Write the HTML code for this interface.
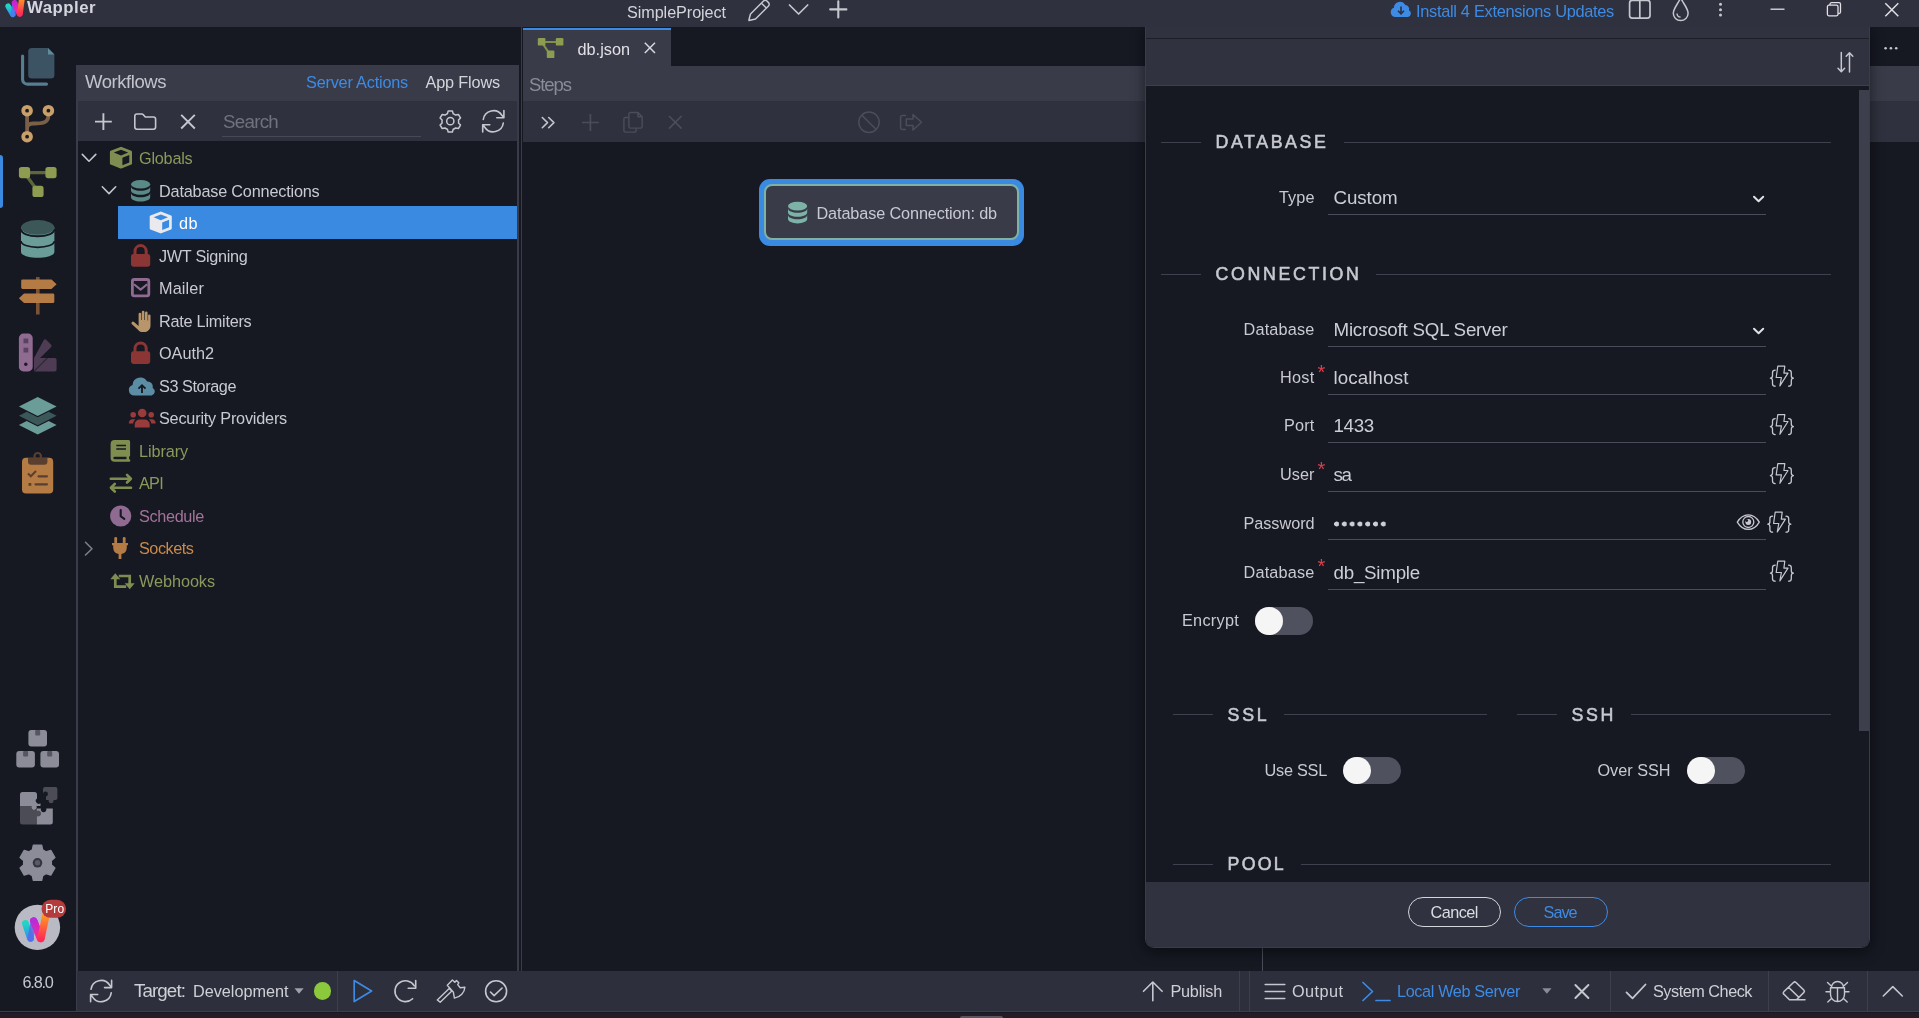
<!DOCTYPE html>
<html><head><meta charset="utf-8"><title>Wappler</title>
<style>
html,body{margin:0;padding:0;}
body{width:1919px;height:1018px;overflow:hidden;background:#161822;position:relative;font-family:"Liberation Sans",sans-serif;}
.a{position:absolute;}
.t{position:absolute;white-space:nowrap;line-height:24px;height:24px;}
svg{position:absolute;overflow:visible;}
.ln{position:absolute;height:1px;background:#3f414e;}
.ul{position:absolute;height:1px;background:#4a4c59;left:1328px;width:437.5px;}
.tg{position:absolute;width:58px;height:27.5px;border-radius:14px;background:#4f515e;}
.tg:after{content:"";position:absolute;left:0;top:0;width:27.5px;height:100%;border-radius:50%;background:#f5f5f6;}
.vs{position:absolute;width:1px;background:#3d3f4c;}
#tx{position:absolute;left:0;top:0;width:1919px;height:1018px;will-change:transform;}

</style></head>
<body>
<!-- base frames -->
<!-- left panel -->
<div class="a" style="left:76px;top:65px;width:2px;height:946px;background:#3a3c49"></div>
<div class="a" style="left:76px;top:65px;width:441.5px;height:35.5px;background:#393b49"></div>
<div class="a" style="left:78px;top:100.5px;width:439.5px;height:40px;background:#2f313e"></div>
<div class="a" style="left:222px;top:136px;width:199px;height:1px;background:#474956"></div>
<div class="a" style="left:118px;top:206px;width:399.5px;height:32.5px;background:#3b8ae2"></div>
<div class="a" style="left:517px;top:65px;width:1.9px;height:906px;background:#393b49"></div>
<div class="a" style="left:521px;top:27px;width:1.2px;height:944px;background:#393b49"></div>
<!-- active indicator -->
<div class="a" style="left:0;top:154.5px;width:3px;height:53px;background:#3b8ae2;border-radius:0 4px 4px 0"></div>
<!-- center pane -->
<div class="a" style="left:523px;top:28px;width:148px;height:38px;background:#393b49;border-top:2.2px solid #3b8ae2;box-sizing:border-box"></div>
<div class="a" style="left:523px;top:66px;width:1396px;height:34.5px;background:#393b49"></div>
<div class="a" style="left:523px;top:100.7px;width:1396px;height:41.2px;background:#2f313e"></div>
<!-- node -->
<div class="a" style="left:759px;top:179.2px;width:264.800px;height:66.600px;border-radius:11px;background:#3b8ae2"></div>
<div class="a" style="left:764px;top:184.200px;width:255.400px;height:56.200px;border-radius:8px;background:#393b49;border:2px solid #7fb2a5;box-sizing:border-box"></div>
<!-- bottom bar -->
<div class="a" style="left:76.700px;top:970.600px;width:1842.300px;height:40.400px;background:#2d2f3c"></div>
<div class="a" style="left:0;top:1011px;width:1919px;height:1.3px;background:#403d48"></div>
<div class="a" style="left:0;top:1012.5px;width:1919px;height:5.5px;background:#251c27"></div>
<div class="a" style="left:960px;top:1015.5px;width:43px;height:2.5px;background:#5a5560;border-radius:2px 2px 0 0"></div>
<div class="vs" style="left:337px;top:971px;height:40px"></div>
<div class="vs" style="left:1238.5px;top:971px;height:40px"></div>
<div class="vs" style="left:1249px;top:971px;height:40px"></div>
<div class="vs" style="left:1610px;top:971px;height:40px"></div>
<div class="vs" style="left:1767.5px;top:971px;height:40px"></div>
<div class="vs" style="left:1866.5px;top:971px;height:40px"></div>
<div class="vs" style="left:1262px;top:947px;height:24px;background:#4a4c59"></div>
<div class="a" style="left:313.900px;top:982.200px;width:17.400px;height:17.400px;border-radius:50%;background:#8cc83c"></div>
<!-- dialog -->
<div class="a" id="dlg" style="left:1145.5px;top:27px;width:723px;height:919.800px;background:#161822;border-radius:0 0 9px 9px;overflow:hidden;box-shadow:0 3px 14px rgba(0,0,0,.5);border:1px solid #3a3c49;border-top:none;box-sizing:content-box;margin-left:-1px">
  <div class="a" style="left:0;top:0;width:724px;height:11px;background:#30323f"></div>
  <div class="a" style="left:0;top:11px;width:724px;height:1px;background:#1c1e28"></div>
  <div class="a" style="left:0;top:12px;width:724px;height:46px;background:#30323f"></div>
  <div class="a" style="left:0;top:58px;width:724px;height:1px;background:#3d3f4c"></div>
  <div class="a" style="left:713.500px;top:63px;width:9.500px;height:641px;background:#3d3f4c"></div>
  <div class="a" style="left:0;top:854.500px;width:724px;height:66px;background:#30323f"></div>
</div>
<div class="a" style="left:0;top:0;width:1919px;height:27px;background:#2f313e"></div>
<!-- dialog lines -->
<div class="ln" style="left:1161px;top:142px;width:40px"></div><div class="ln" style="left:1344px;top:142px;width:487px"></div>
<div class="ln" style="left:1161px;top:274px;width:40px"></div><div class="ln" style="left:1376px;top:274px;width:455px"></div>
<div class="ln" style="left:1173px;top:713.9px;width:40px"></div><div class="ln" style="left:1284px;top:713.9px;width:203px"></div>
<div class="ln" style="left:1517px;top:713.9px;width:40px"></div><div class="ln" style="left:1631px;top:713.9px;width:200px"></div>
<div class="ln" style="left:1173px;top:864px;width:40px"></div><div class="ln" style="left:1301px;top:864px;width:530px"></div>
<div class="ul" style="top:213.800px"></div>
<div class="ul" style="top:345.900px"></div>
<div class="ul" style="top:393.700px"></div>
<div class="ul" style="top:441.800px"></div>
<div class="ul" style="top:490.900px"></div>
<div class="ul" style="top:539.300px"></div>
<div class="ul" style="top:588.700px"></div>
<div class="tg" style="left:1255px;top:607px;height:28px"></div>
<div class="tg" style="left:1343px;top:756.5px"></div>
<div class="tg" style="left:1687px;top:756.5px"></div>
<div class="a" style="left:1408px;top:897px;width:93px;height:30px;border:1.5px solid #d4d5da;border-radius:16px;box-sizing:border-box"></div>
<div class="a" style="left:1514px;top:897px;width:94px;height:30px;border:1.5px solid #3d8be4;border-radius:16px;box-sizing:border-box"></div>
<!-- password dots -->
<div class="a" style="left:1334.200px;top:520.800px;width:52.500px;height:6px;background:radial-gradient(circle at 2.600px 3px,#cdced5 2.200px,transparent 2.800px);background-size:7.800px 6px"></div>
<!-- icon bar -->
<svg width="1919" height="1018" viewBox="0 0 1919 1018" style="left:0;top:0;pointer-events:none">
<!-- files -->
<path d="M22.6 56 V79.5 a4.6 4.6 0 0 0 4.6 4.6 H46.5" fill="none" stroke="#557f8f" stroke-width="3.1" stroke-linecap="round"/>
<path d="M31.8 48 H48 L54.4 54.4 V75 a3.6 3.6 0 0 1 -3.6 3.6 H31.8 a3.6 3.6 0 0 1 -3.6 -3.6 V51.6 a3.6 3.6 0 0 1 3.6 -3.6z" fill="#3c5363"/>
<path d="M48 48 L54.4 54.4 H48z" fill="#5f8b9b"/>
<!-- git -->
<path d="M27.1 115 V131.5 M48.4 115.5 C48.4 124 40 123.5 33 123.5 C29 123.5 27.1 125.5 27.1 128" fill="none" stroke="#7a6047" stroke-width="3.8"/>
<g fill="#c9a06a"><circle cx="27.1" cy="110.7" r="5.8"/><circle cx="48.4" cy="110.7" r="5.8"/><circle cx="27.1" cy="136.7" r="5.8"/></g>
<g fill="#1c1a20"><circle cx="27.1" cy="110.7" r="1.9"/><circle cx="48.4" cy="110.7" r="1.9"/><circle cx="27.1" cy="136.7" r="1.9"/></g>
<!-- workflow -->
<path d="M27 172.6 H50 M26 175 L37 190" stroke="#5d6739" stroke-width="3.2" fill="none"/>
<g fill="#8d9c50"><rect x="18.9" y="166.9" width="11.2" height="11.3" rx="2.6"/><rect x="45.4" y="166.9" width="11.2" height="11.3" rx="2.6"/><rect x="32.4" y="185.8" width="11.2" height="11.3" rx="2.6"/></g>
<!-- db -->
<path d="M21 227.500 V252 c0 3.200 7.500 5.800 16.700 5.800 s16.700 -2.600 16.700 -5.800 V227.500z" fill="#6a9c98"/>
<path d="M21 241 C21 244.800 28.500 247.300 37.700 247.300 S54.400 244.800 54.400 241" fill="none" stroke="#161822" stroke-width="1.700"/>
<path d="M21 229 C21 233.500 28.500 236.300 37.700 236.300 S54.400 233.500 54.400 229" fill="none" stroke="#161822" stroke-width="2"/>
<ellipse cx="37.700" cy="227.400" rx="16.700" ry="7.400" fill="#3c5758"/>
<!-- signpost -->
<rect x="36" y="277" width="3.600" height="37.500" fill="#7a5337"/>
<path d="M22.500 279.500 H51.500 L56.600 284.200 L51.500 288.900 H22.500 a1.300 1.300 0 0 1 -1.300 -1.300 V280.800 a1.300 1.300 0 0 1 1.300 -1.300z" fill="#b57b45"/>
<path d="M53 293.600 H24 L18.900 298.300 L24 303 H53 a1.300 1.300 0 0 0 1.300 -1.300 V294.900 a1.300 1.300 0 0 0 -1.300 -1.300z" fill="#b57b45"/>
<!-- swatch -->
<path d="M34 371.400 L34 358 L43.500 340.500 a2 2 0 0 1 3 -0.500 L51 344.500 a2 2 0 0 1 0 2.800 L40 358 H54.600 a2 2 0 0 1 2 2 V369.400 a2 2 0 0 1 -2 2z" fill="#4e3c54"/>
<path d="M34 371.400 L51.800 353.500" stroke="#161822" stroke-width="1.2" fill="none" opacity=".55"/>
<rect x="18.900" y="333.600" width="13.800" height="37.800" rx="4.500" fill="#8f6a91"/>
<rect x="23.500" y="338.500" width="4.800" height="4.800" fill="#5a4260"/><rect x="23.500" y="347.700" width="4.800" height="4.800" fill="#5a4260"/><circle cx="25.800" cy="364.300" r="1.700" fill="#20182a"/>
<!-- layers -->
<path d="M18.900 425 L26.700 421 L37.700 426.600 L48.700 421 L56.600 425 L37.700 434.600z" fill="#6a9c98"/>
<path d="M18.900 415.700 L26.700 411.700 L37.700 417.300 L48.700 411.700 L56.600 415.700 L37.700 425.300z" fill="#3c5758"/>
<path d="M37.700 397 L56.600 406.500 L37.700 416.100 L18.900 406.500z" fill="#6a9c98"/>
<!-- clipboard -->
<rect x="22" y="457.800" width="31.200" height="35.600" rx="4" fill="#b57b45"/>
<circle cx="37.700" cy="456.300" r="3.300" fill="none" stroke="#5b3f2e" stroke-width="2.200"/>
<path d="M28 458 H47.400 V461.800 a3 3 0 0 1 -3 3 H31 a3 3 0 0 1 -3 -3z" fill="#5b3f2e"/>
<path d="M28 473.500 L30.800 476.300 L36 471" stroke="#5b3f2e" stroke-width="2" fill="none"/>
<path d="M38.500 476.300 H47 M35.500 484.300 H47" stroke="#5b3f2e" stroke-width="2.200" fill="none" stroke-linecap="round"/>
<rect x="28.500" y="483" width="2.800" height="2.800" fill="#5b3f2e"/>
<!-- boxes -->
<g fill="#8b8c97"><rect x="28.400" y="730" width="18.600" height="16.400" rx="3"/><rect x="16.300" y="751" width="18.600" height="16.400" rx="3"/><rect x="40.400" y="751" width="18.600" height="16.400" rx="3"/></g>
<g fill="#55565f"><rect x="35.200" y="730" width="5" height="5.500" rx="1"/><rect x="23.100" y="751" width="5" height="5.500" rx="1"/><rect x="47.200" y="751" width="5" height="5.500" rx="1"/></g>
<!-- puzzle -->
<path d="M43 789 a2 2 0 0 1 2 -2 H55.400 a2 2 0 0 1 2 2 V798 a2 2 0 0 1 -2 2 H53.500 a2.500 2.500 0 1 1 -4.800 0 H46 V796.500 a2.500 2.500 0 1 0 -3 -2.600z" fill="#4b4c56"/>
<path d="M20 794.500 a2.500 2.500 0 0 1 2.500 -2.500 H34.500 a2.500 2.500 0 0 1 2.500 2.500 V798.500 a2.800 2.800 0 1 0 3.500 4.700 V806 H36.500 a2.800 2.800 0 1 1 -5 0 H20z" fill="#8b8c97"/>
<path d="M20 806 H31.500 a2.800 2.800 0 1 0 5 0 H36.800 V811 a2.800 2.800 0 1 1 0 5 V824.400 H22.500 a2.500 2.500 0 0 1 -2.500 -2.500z" fill="#4b4c56"/>
<path d="M36.800 808.500 H41 a2.800 2.800 0 1 0 5.200 0 H52.800 V822 a2.500 2.500 0 0 1 -2.500 2.500 H36.800 V816 a2.800 2.800 0 1 0 0 -5z" fill="#8b8c97"/>
<!-- gear -->
<g transform="translate(37.500 862.800) scale(.96)">
<path id="gt" d="M-4.300 -18.300 h8.600 l1.100 5 a13.800 13.800 0 0 1 3.500 2 l4.900 -1.600 l4.300 7.400 l-3.800 3.400 a13.800 13.800 0 0 1 0 4.100 l3.800 3.400 l-4.300 7.400 l-4.900 -1.600 a13.800 13.800 0 0 1 -3.500 2 l-1.100 5 h-8.600 l-1.100 -5 a13.800 13.800 0 0 1 -3.500 -2 l-4.900 1.600 l-4.300 -7.400 l3.800 -3.400 a13.800 13.800 0 0 1 0 -4.100 l-3.800 -3.400 l4.300 -7.400 l4.900 1.600 a13.800 13.800 0 0 1 3.500 -2z" fill="#8b8c97" stroke="#8b8c97" stroke-width="1.500" stroke-linejoin="round"/>
<circle r="5" fill="#33343e"/><circle r="2.800" fill="#585962"/>
</g>
<!-- avatar -->
<circle cx="37.400" cy="927.400" r="22.700" fill="#b9bac4"/>
<defs>
<linearGradient id="w1" x1="0" y1="0" x2="0" y2="1"><stop offset="0" stop-color="#1fd6c4"/><stop offset="1" stop-color="#2f8ff0"/></linearGradient>
<linearGradient id="w2" x1="0" y1="0" x2="0" y2="1"><stop offset="0" stop-color="#c822d8"/><stop offset="1" stop-color="#ff2d8a"/></linearGradient>
<linearGradient id="w3" x1="0" y1="0" x2="0" y2="1"><stop offset="0" stop-color="#ff9a1f"/><stop offset="1" stop-color="#ff2d55"/></linearGradient>
</defs>
<path d="M25.500 923.500 L30.500 938.500" stroke="url(#w1)" stroke-width="7" stroke-linecap="round"/>
<path d="M33.500 920.500 L30.500 938.500" stroke="#3f7fe8" stroke-width="7" stroke-linecap="round" opacity=".0"/>
<path d="M33.800 921 L40.500 938.500" stroke="url(#w2)" stroke-width="7.400" stroke-linecap="round"/>
<path d="M33.800 921 L30.500 938.500" stroke="#5a6ae8" stroke-width="6" stroke-linecap="round" opacity=".85"/>
<path d="M33.800 921 L40.500 938.500" stroke="url(#w2)" stroke-width="7.400" stroke-linecap="round" opacity=".8"/>
<path d="M46 915 L41 938.500" stroke="url(#w3)" stroke-width="7.400" stroke-linecap="round"/>
<rect x="41.500" y="899.800" width="24.600" height="18" rx="9" fill="#b43a3c"/>
</svg>
<svg width="1919" height="1018" viewBox="0 0 1919 1018" style="left:0;top:0;pointer-events:none">
<!-- logo -->
<path d="M8.200 6.300 L12.800 14.300" stroke="url(#w1)" stroke-width="5.600" stroke-linecap="round"/>
<path d="M14.600 3 L12.900 14.300" stroke="#4a7cf0" stroke-width="4.800" stroke-linecap="round" opacity=".9"/>
<path d="M14.600 3 L19.600 13.800" stroke="url(#w2)" stroke-width="5.800" stroke-linecap="round"/>
<path d="M22 -2 L19.900 13.600" stroke="url(#w3)" stroke-width="5.800" stroke-linecap="round"/>
<!-- title: pencil -->
<g fill="none" stroke="#c6c7ce" stroke-width="1.500" stroke-linejoin="round" stroke-linecap="round">
<path d="M749 19.500 L750.500 14 L763.500 1 a2.400 2.400 0 0 1 3.400 0 L768.500 2.600 a2.400 2.400 0 0 1 0 3.400 L755.500 19 L749 20.500z M761.500 3.200 L766.300 8"/>
<path d="M789.500 5 L798.600 14 L807.700 5" stroke-width="1.700"/>
<path d="M838.300 1.300 V17.500 M830.200 9.400 H846.400" stroke-width="2.100"/>
</g>
<!-- cloud download -->
<path d="M1395.500 17 a4.800 4.800 0 0 1 -1.600 -9.300 a6.200 6.200 0 0 1 11.500 -2.800 a4.200 4.200 0 0 1 3.600 5.400 a3.600 3.600 0 0 1 -1 6.700z" fill="#3d8be4"/>
<path d="M1401 6.500 V13.500 M1398 10.800 L1401 13.800 L1404 10.800" stroke="#2f313e" stroke-width="1.600" fill="none"/>
<!-- split icon -->
<g fill="none" stroke="#c6c7ce" stroke-width="1.700">
<rect x="1629.600" y="0.300" width="20.400" height="17.900" rx="2.600"/><path d="M1639.800 0.300 V18.200"/>
<path d="M1680.700 -2 C1677 5 1673.300 9 1673.300 13.200 a7.400 7.400 0 0 0 14.800 0 C1688.100 9 1684.400 5 1680.700 -2z" stroke-width="1.500"/>
<path d="M1677 13.500 a3.800 3.800 0 0 0 3.600 3.600" stroke-width="1.400"/>
</g>
<g fill="#c6c7ce"><circle cx="1720.500" cy="4.300" r="1.500"/><circle cx="1720.500" cy="9.700" r="1.500"/><circle cx="1720.500" cy="15.100" r="1.500"/></g>
<g fill="none" stroke="#e0e0e5" stroke-width="1.300">
<path d="M1770.500 9.200 H1784.500"/>
<rect x="1827.400" y="5.200" width="10.600" height="10.600" rx="1.500"/><path d="M1830 5 V4.200 a1.500 1.500 0 0 1 1.500 -1.500 H1839 a1.500 1.500 0 0 1 1.500 1.500 V12 a1.500 1.500 0 0 1 -1.500 1.500 H1838.200"/>
<path d="M1885.300 3.200 L1898.300 16.200 M1898.300 3.200 L1885.300 16.200" stroke-width="1.500"/>
</g>
<!-- left toolbar -->
<g fill="none" stroke="#c6c7ce" stroke-width="1.900">
<path d="M103.400 113.200 V130 M95 121.600 H111.800"/>
<path d="M134.800 127 V116.200 a2.200 2.200 0 0 1 2.200 -2.200 H141.800 a2 2 0 0 1 1.500 0.700 L145.300 117 H153.400 a2.200 2.200 0 0 1 2.200 2.200 V127 a2.200 2.200 0 0 1 -2.200 2.200 H137 a2.200 2.200 0 0 1 -2.200 -2.200z" stroke-width="1.600"/>
<path d="M181.200 114.900 L194.800 128.500 M194.800 114.900 L181.200 128.500"/>
</g>
<!-- gear outline -->
<g transform="translate(450.300 121.200)" fill="none" stroke="#c6c7ce" stroke-width="1.500" stroke-linejoin="round">
<path d="M-2.100 -10.300 h4.200 l0.800 2.800 a7.800 7.800 0 0 1 2.400 1.400 l2.800 -0.700 l2.100 3.600 l-2 2.100 a7.800 7.800 0 0 1 0 2.800 l2 2.100 l-2.100 3.600 l-2.800 -0.700 a7.800 7.800 0 0 1 -2.400 1.400 l-0.800 2.800 h-4.200 l-0.800 -2.800 a7.800 7.800 0 0 1 -2.400 -1.400 l-2.800 0.700 l-2.100 -3.600 l2 -2.100 a7.800 7.800 0 0 1 0 -2.800 l-2 -2.100 l2.100 -3.600 l2.800 0.700 a7.800 7.800 0 0 1 2.400 -1.400z"/>
<circle r="3.600"/>
</g>
<!-- refresh -->
<g fill="none" stroke="#c6c7ce" stroke-width="1.600" stroke-linecap="round" stroke-linejoin="round">
<path d="M483.300 119.500 a10.200 10.200 0 0 1 18.600 -4.300 L503.700 117.500 M503.900 110.600 V117.800 H496.800"/>
<path d="M503.300 123 a10.200 10.200 0 0 1 -18.600 4.300 L482.900 125 M482.700 131.900 V124.700 H489.800"/>
</g>
<!-- tree chevrons -->
<g fill="none" stroke="#c4c5cc" stroke-width="1.600" stroke-linecap="round" stroke-linejoin="round">
<path d="M82.300 154.400 L89 161.200 L95.800 154.400"/>
<path d="M102.300 186.800 L109 193.600 L115.700 186.800"/>
<path d="M85.500 542.300 L92 548.700 L85.500 555" stroke="#7d7e8a"/>
</g>
<!-- cube icons -->
<g id="cube" fill="#7f8e50">
<path fill-rule="evenodd" d="M121 146.800 L131.300 150.800 a1.200 1.200 0 0 1 0.700 1.100 V163.500 a1.200 1.200 0 0 1 -0.700 1.100 L121.400 168.500 a1.200 1.200 0 0 1 -0.900 0 L110.600 164.600 a1.200 1.200 0 0 1 -0.700 -1.100 V151.900 a1.200 1.200 0 0 1 0.700 -1.100 L120.500 146.900 a1.200 1.200 0 0 1 0.500 -0.100z M121 149.700 L113.800 152.500 L121 155.400 L128.200 152.500z M122.400 157.800 V165.200 L129.300 162.500 V155z"/>
</g>

<g transform="translate(39.800 64.800)" fill="#e9e9ee">
<path fill-rule="evenodd" d="M121 146.800 L131.300 150.800 a1.200 1.200 0 0 1 0.700 1.100 V163.500 a1.200 1.200 0 0 1 -0.700 1.100 L121.400 168.500 a1.200 1.200 0 0 1 -0.900 0 L110.600 164.600 a1.200 1.200 0 0 1 -0.700 -1.100 V151.900 a1.200 1.200 0 0 1 0.700 -1.100 L120.500 146.900 a1.200 1.200 0 0 1 0.500 -0.100z M121 149.700 L113.800 152.500 L121 155.400 L128.200 152.500z M122.400 157.800 V165.200 L129.300 162.500 V155z"/>
</g>
<!-- tree db icon -->
<g id="dbs" fill="#5a8a87">
<ellipse cx="140.600" cy="184.200" rx="9.600" ry="4.300"/>
<path d="M131 186.500 c0 2.400 4.300 4.300 9.600 4.300 s9.600 -1.900 9.600 -4.300 V190.500 c0 2.400 -4.300 4.300 -9.600 4.300 s-9.600 -1.900 -9.600 -4.300z"/>
<path d="M131 193 c0 2.400 4.300 4.300 9.600 4.300 s9.600 -1.900 9.600 -4.300 V197.200 c0 2.400 -4.300 4.300 -9.600 4.300 s-9.600 -1.900 -9.600 -4.300z"/>
</g>
<!-- locks -->
<g id="lock" fill="#8c3535">
<rect x="131" y="254" width="19.200" height="12.700" rx="2.400"/>
<path d="M135 255 V251.200 a5.600 5.600 0 0 1 11.200 0 V255" fill="none" stroke="#8c3535" stroke-width="3"/>
</g>
<use href="#lock" y="97.300"/>
<!-- mail -->
<g fill="none" stroke="#8f6a91" stroke-linejoin="round">
<rect x="132.400" y="279.500" width="16.400" height="16.400" rx="1.800" stroke-width="2.800"/>
<path d="M134 284.200 L140.600 289.600 L147.200 284.200" stroke-width="2.100"/>
</g>
<!-- hand -->
<g fill="#b8956a">
<path d="M138.600 322 V314 a1.300 1.300 0 0 1 2.600 0 V320 h0.600 V312 a1.300 1.300 0 0 1 2.600 0 V320 h0.600 V312.800 a1.300 1.300 0 0 1 2.600 0 V320.500 h0.500 V315.600 a1.200 1.200 0 0 1 2.400 0 V325.500 c0 4 -2.800 6.600 -6.600 6.600 h-1 c-2.400 0 -4 -1 -5.200 -2.600 L131.700 323.900 a1.500 1.500 0 0 1 2.300 -1.900 L138.600 326z"/>
</g>
<!-- cloud up -->
<path d="M134.300 395.400 a5.400 5.400 0 0 1 -1.800 -10.500 a7.800 7.800 0 0 1 14.600 -3.400 a5.300 5.300 0 0 1 5.700 6.500 a4 4 0 0 1 -1.200 7.400z" fill="#5b8ea4"/>
<path d="M142 393 V385.500 M138.500 388.700 L142 385.200 L145.500 388.700" stroke="#161822" stroke-width="1.800" fill="none"/>
<!-- users -->
<g fill="#9a3b3b">
<circle cx="142.200" cy="413" r="4.300"/><path d="M134.700 427.500 V424.500 a5 5 0 0 1 5 -5 h5 a5 5 0 0 1 5 5 V427.500z"/>
<circle cx="133.200" cy="414.700" r="2.800"/><circle cx="151.200" cy="414.700" r="2.800"/>
<path d="M128.800 423.500 a3.800 3.800 0 0 1 3.800 -4.300 h2.800 a6.500 6.500 0 0 0 -2.300 4.300z M155.600 423.500 a3.800 3.800 0 0 0 -3.800 -4.300 h-2.800 a6.500 6.500 0 0 1 2.300 4.300z"/>
</g>
<!-- book -->
<path d="M114.600 440 H128.600 a1.500 1.500 0 0 1 1.500 1.500 V455.500 a1 1 0 0 1 -1 1 V459.200 a1.200 1.200 0 0 1 0 2.500 H114.600 a4 4 0 0 1 -4 -4 V444 a4 4 0 0 1 4 -4z M114.600 456.800 a1.200 1.200 0 0 0 0 2.500 H126.500 V456.800z" fill="#7f8e50" fill-rule="evenodd"/>
<path d="M116.300 445.500 H126 M116.300 449 H126" stroke="#161822" stroke-width="1.400"/>
<!-- exchange arrows -->
<g fill="none" stroke="#7f8e50" stroke-width="2.600" stroke-linecap="round" stroke-linejoin="round">
<path d="M110.800 478.700 H130.800 M127 474.900 L130.900 478.700 L127 482.500"/>
<path d="M131 487.700 H111 M114.800 483.900 L110.900 487.700 L114.800 491.500"/>
</g>
<!-- clock -->
<circle cx="120.700" cy="516" r="10.600" fill="#8f6a91"/>
<path d="M120.700 510 V516.300 L124.300 518.800" stroke="#161822" stroke-width="2.100" fill="none" stroke-linecap="round"/>
<!-- plug -->
<g fill="#b57b45">
<rect x="114.300" y="537" width="2.800" height="7" rx="1.200"/><rect x="122.800" y="537" width="2.800" height="7" rx="1.200"/>
<path d="M112 543 H128 V545.300 H126.800 V547.500 a6.800 6.800 0 0 1 -5.400 6.600 V559 H118.600 V554.100 a6.800 6.800 0 0 1 -5.400 -6.600 V545.300 H112z"/>
</g>
<!-- retweet -->
<g fill="none" stroke="#7f8e50" stroke-width="2.700" stroke-linejoin="miter">
<path d="M115.300 578.500 V586.600 H126.200"/>
<path d="M129.700 584 V576 H118.800"/>
</g>
<g fill="#7f8e50"><path d="M110.300 579.300 L115.300 573.300 L120.300 579.300z"/><path d="M124.700 583.300 L129.700 589.300 L134.700 583.300z"/></g>
</svg>
<svg width="1919" height="1018" viewBox="0 0 1919 1018" style="left:0;top:0;pointer-events:none">
<!-- tab icon -->
<path d="M542 42 H557 M543 44 L549 53" stroke="#828f48" stroke-width="2.200" fill="none"/>
<g fill="#8d9c50"><rect x="537.800" y="38" width="7.600" height="7.600" rx="1.200"/><rect x="555.800" y="38" width="7.600" height="7.600" rx="1.200"/><rect x="546.800" y="50.500" width="7.600" height="7.600" rx="1.200"/></g>
<path d="M644.800 42.800 L655 53 M655 42.800 L644.800 53" stroke="#d8d9de" stroke-width="1.500" fill="none"/>
<!-- center toolbar -->
<g fill="none" stroke="#c4c5cc" stroke-width="1.600" stroke-linecap="round" stroke-linejoin="round">
<path d="M542.300 117.500 L547.500 122.600 L542.300 127.700 M548.700 117.500 L553.900 122.600 L548.700 127.700"/>
</g>
<g fill="none" stroke="#4b4d5a" stroke-width="1.700" stroke-linejoin="round">
<path d="M590.400 114 V131 M582 122.500 H598.800"/>
<path d="M669 116 L681.600 128.600 M681.600 116 L669 128.600"/>
<path d="M630.500 112.500 H638 L642.200 116.700 V126.500 a1.600 1.600 0 0 1 -1.600 1.600 H630.500 a1.600 1.600 0 0 1 -1.600 -1.600 V114.100 a1.600 1.600 0 0 1 1.600 -1.600z M638 112.500 V116.700 H642.200" stroke-width="1.400"/>
<path d="M628.900 117.500 H625.500 a1.600 1.600 0 0 0 -1.600 1.600 V130.500 a1.600 1.600 0 0 0 1.600 1.600 H634.500 a1.600 1.600 0 0 0 1.600 -1.600 V128.200" stroke-width="1.400"/>
<circle cx="869" cy="122.300" r="10.200" stroke-width="1.500"/><path d="M861.800 115.100 L876.200 129.500" stroke-width="1.500"/>
<path d="M906 115.500 H902.600 a2 2 0 0 0 -2 2 V127.500 a2 2 0 0 0 2 2 H906" stroke-width="1.500"/>
<path d="M906.300 119 H913 V114.500 L921.500 122.300 L913 130 V125.500 H906.300z" stroke-width="1.500"/>
</g>
<!-- node db icon -->
<g transform="translate(657 21.900)"><g fill="#7db3a6">
<ellipse cx="140.600" cy="184.200" rx="9.600" ry="4.300"/>
<path d="M131 186.500 c0 2.400 4.300 4.300 9.600 4.300 s9.600 -1.900 9.600 -4.300 V190.500 c0 2.400 -4.300 4.300 -9.600 4.300 s-9.600 -1.900 -9.600 -4.300z"/>
<path d="M131 193 c0 2.400 4.300 4.300 9.600 4.300 s9.600 -1.900 9.600 -4.300 V197.200 c0 2.400 -4.300 4.300 -9.600 4.300 s-9.600 -1.900 -9.600 -4.300z"/>
</g></g>
<!-- ... -->
<g fill="#c6c7ce"><circle cx="1885.600" cy="48.300" r="1.300"/><circle cx="1890.900" cy="48.300" r="1.300"/><circle cx="1896.200" cy="48.300" r="1.300"/></g>
<!-- dialog: sort icon -->
<g fill="none" stroke="#c6c7ce" stroke-width="1.500" stroke-linecap="round" stroke-linejoin="round">
<path d="M1841.300 52.500 V71.500 M1838 68.200 L1841.300 71.700 L1844.600 68.200"/>
<path d="M1849.500 72 V53 M1846.200 56.300 L1849.500 52.800 L1852.800 56.300"/>
</g>
<!-- select chevrons -->
<g fill="none" stroke="#e0e0e5" stroke-width="2" stroke-linecap="round" stroke-linejoin="round">
<path d="M1754 196.800 L1758.600 201.200 L1763.200 196.800"/>
<path d="M1754 328.800 L1758.600 333.200 L1763.200 328.800"/>
</g>
<!-- binding icons -->
<defs>
<g id="bind" fill="none" stroke="#c6c7ce" stroke-width="1.300" stroke-linejoin="round" stroke-linecap="round">
<path d="M-6.600 -6.200 c-2 0 -2.700 0.800 -2.700 2.500 v3 c0 1.500 -0.600 2.300 -2.100 2.500 c1.500 0.200 2.100 1 2.100 2.500 v3 c0 1.700 0.700 2.500 2.700 2.500"/>
<path d="M6.800 -6.200 c2 0 2.700 0.800 2.700 2.500 v3 c0 1.500 0.600 2.300 2.100 2.500 c-1.500 0.200 -2.100 1 -2.100 2.500 v3 c0 1.700 -0.700 2.500 -2.700 2.500"/>
<path d="M-4 -10.200 H3 L2.100 -3.300 H6.200 L-1.900 9.500 L-0.400 1.100 H-5.600z" stroke-width="1.200"/>
</g>
</defs>
<use href="#bind" x="1781.800" y="376.400"/>
<use href="#bind" x="1781.800" y="424.800"/>
<use href="#bind" x="1781.800" y="473.800"/>
<use href="#bind" x="1779.200" y="522.400"/>
<use href="#bind" x="1781.800" y="571.400"/>
<!-- eye -->
<g fill="none" stroke="#c6c7ce" stroke-width="1.300">
<path d="M1737.300 522.100 C1740 517.500 1744 514.800 1748.300 514.800 S1756.600 517.500 1759.300 522.100 C1756.600 526.700 1752.600 529.400 1748.300 529.400 S1740 526.700 1737.300 522.100z"/>
<circle cx="1748.300" cy="522" r="5.500"/>
</g>
<circle cx="1748.300" cy="522" r="2.900" fill="#c6c7ce"/><circle cx="1746.800" cy="520.600" r="1.300" fill="#161822"/>
<!-- bottom bar -->
<g fill="none" stroke="#c6c7ce" stroke-width="1.600" stroke-linecap="round" stroke-linejoin="round">
<path d="M91 989.300 a10.200 10.200 0 0 1 18.600 -4.300 L111.400 987.300 M111.600 980.400 V987.600 H104.500"/>
<path d="M111.200 992.800 a10.200 10.200 0 0 1 -18.600 4.300 L90.800 994.800 M90.600 1001.700 V994.500 H97.700"/>
<path d="M412.600 998.700 A10.400 10.400 0 1 1 414.300 985.900 M415.700 980.600 V988.200 H408.200"/>
<circle cx="496.100" cy="991.300" r="10.500"/><path d="M490.500 992 L494.100 995.600 L502.100 988"/>
<path d="M437.300 999.900 L449.200 988.500 L451.800 991 L440.200 1002.200z M447.300 985.200 L452.400 980.100 L454.800 982.300 L456.500 980.500 L458.800 982.800 L457.700 984.600 L460.200 987.700 L464.900 987.200 C464.500 992.500 460.500 997.300 454.400 998.100 L453.400 992.300z" stroke-width="1.400"/>
<path d="M1152.800 1000.800 V982.300 M1143.500 991.300 L1152.800 982 L1162.100 991.300"/>
<path d="M1265.200 984.500 H1284.800 M1265.200 991.500 H1284.800 M1265.200 998.500 H1284.800"/>
<path d="M1626.500 992.400 L1632.500 998.300 L1645.500 984.500" stroke-width="1.800"/>
<path d="M1575.400 985 L1588.400 998 M1588.400 985 L1575.400 998" stroke-width="1.900"/>
<path d="M1883.300 996 L1892.800 986.600 L1902.300 996"/>
<path d="M1784 991.500 L1793.500 982.500 a1.800 1.800 0 0 1 2.500 0 L1803.800 990 a1.800 1.800 0 0 1 0 2.500 L1796.500 999.800 H1789.500 L1784 994.300 a1.800 1.800 0 0 1 0 -2.800z M1788.500 987.300 L1799 997.500 M1796.500 999.800 H1805"/>
<path d="M1831.500 987.500 a6 6 0 0 1 12 0 M1830.500 987.700 H1844.500 V994.500 a7 7 0 0 1 -14 0z M1837.500 988 V1001.200 M1830.500 991.800 H1826 M1849 991.800 H1844.500 M1830.700 985.500 L1827.500 982.500 M1844.300 985.500 L1847.500 982.500 M1831.500 998.500 L1827.800 1002 M1843.500 998.500 L1847.200 1002" stroke-width="1.400"/>
</g>
<path d="M354.200 980.500 L371.600 991 L354.200 1001.500z" fill="none" stroke="#3d8be4" stroke-width="1.700" stroke-linejoin="round"/>
<path d="M1363 982.500 L1372.500 991.500 L1363 1000.500 M1376 1000.500 H1390" fill="none" stroke="#3d8be4" stroke-width="1.700" stroke-linecap="round" stroke-linejoin="round"/>
<path d="M294.500 988.300 H303.600 L299 993.800z" fill="#a0a1aa"/>
<path d="M1542.300 988.200 H1551.500 L1546.900 993.700z" fill="#8b8c97"/>
</svg>

<!-- texts -->
<div id="tx">
<span class="t" style="top:-4.40px;left:27.00px;font-size:16.80px;color:#d4d5de;letter-spacing:0.489px;font-weight:700;">Wappler</span>
<span class="t" style="top:-0.20px;left:627.00px;font-size:16.20px;color:#d4d5da;letter-spacing:-0.067px;">SimpleProject</span>
<span class="t" style="top:-0.80px;left:1416.00px;font-size:16.40px;color:#3d8be4;letter-spacing:-0.315px;">Install 4 Extensions Updates</span>
<span class="t" style="top:70.00px;left:85.00px;font-size:18.50px;color:#c3c4cb;letter-spacing:-0.443px;">Workflows</span>
<span class="t" style="top:69.80px;left:306.00px;font-size:16.25px;color:#3d8be4;letter-spacing:-0.199px;">Server Actions</span>
<span class="t" style="top:69.80px;left:425.50px;font-size:16.25px;color:#d4d5da;letter-spacing:-0.153px;">App Flows</span>
<span class="t" style="top:109.50px;left:223.00px;font-size:18.75px;color:#70727e;letter-spacing:-0.737px;">Search</span>
<span class="t" style="top:146.00px;left:139.00px;font-size:16.25px;color:#8a9a5b;letter-spacing:-0.230px;">Globals</span>
<span class="t" style="top:178.50px;left:159.00px;font-size:16.25px;color:#c9cad1;letter-spacing:-0.196px;">Database Connections</span>
<span class="t" style="top:211.00px;left:179.00px;font-size:16.25px;color:#ffffff;letter-spacing:0.461px;">db</span>
<span class="t" style="top:243.50px;left:159.00px;font-size:16.25px;color:#c9cad1;letter-spacing:-0.303px;">JWT Signing</span>
<span class="t" style="top:276.00px;left:159.00px;font-size:16.25px;color:#c9cad1;letter-spacing:0.125px;">Mailer</span>
<span class="t" style="top:308.50px;left:159.00px;font-size:16.25px;color:#c9cad1;letter-spacing:-0.249px;">Rate Limiters</span>
<span class="t" style="top:341.00px;left:159.00px;font-size:16.25px;color:#c9cad1;letter-spacing:-0.018px;">OAuth2</span>
<span class="t" style="top:373.50px;left:159.00px;font-size:16.25px;color:#c9cad1;letter-spacing:-0.431px;">S3 Storage</span>
<span class="t" style="top:406.00px;left:159.00px;font-size:16.25px;color:#c9cad1;letter-spacing:-0.214px;">Security Providers</span>
<span class="t" style="top:438.50px;left:139.00px;font-size:16.25px;color:#8a9a5b;letter-spacing:-0.096px;">Library</span>
<span class="t" style="top:471.00px;left:139.00px;font-size:16.25px;color:#8a9a5b;letter-spacing:-0.734px;">API</span>
<span class="t" style="top:503.50px;left:139.00px;font-size:16.25px;color:#a3739a;letter-spacing:-0.346px;">Schedule</span>
<span class="t" style="top:536.00px;left:139.00px;font-size:16.25px;color:#c98a4a;letter-spacing:-0.473px;">Sockets</span>
<span class="t" style="top:568.50px;left:139.00px;font-size:16.25px;color:#8a9a5b;letter-spacing:-0.061px;">Webhooks</span>
<span class="t" style="top:36.60px;left:577.50px;font-size:16.30px;color:#e0e0e5;letter-spacing:-0.002px;">db.json</span>
<span class="t" style="top:72.50px;left:529.00px;font-size:18.50px;color:#8a8c98;letter-spacing:-1.062px;">Steps</span>
<span class="t" style="top:201.00px;left:816.50px;font-size:16.25px;color:#c8c9d2;letter-spacing:-0.126px;">Database Connection: db</span>
<span class="t" style="top:970.20px;left:22.50px;font-size:16.25px;color:#c6c7ce;letter-spacing:-1.191px;">6.8.0</span>
<span class="t" style="top:897.00px;left:45.20px;font-size:12.00px;color:#ffffff;letter-spacing:0.104px;">Pro</span>
<span class="t" style="top:978.90px;left:134.00px;font-size:18.75px;color:#cfd0d6;letter-spacing:-0.904px;">Target:</span>
<span class="t" style="top:978.90px;left:193.00px;font-size:16.25px;color:#cfd0d6;letter-spacing:-0.023px;">Development</span>
<span class="t" style="top:978.90px;left:1170.50px;font-size:16.25px;color:#cfd0d6;letter-spacing:-0.257px;">Publish</span>
<span class="t" style="top:978.90px;left:1292.00px;font-size:16.25px;color:#cfd0d6;letter-spacing:0.451px;">Output</span>
<span class="t" style="top:978.90px;left:1397.00px;font-size:16.25px;color:#3d8be4;letter-spacing:-0.366px;">Local Web Server</span>
<span class="t" style="top:978.90px;left:1653.00px;font-size:16.25px;color:#cfd0d6;letter-spacing:-0.480px;">System Check</span>
<span class="t" style="top:129.50px;left:1215.50px;font-size:17.80px;color:#c8c9d0;letter-spacing:2.596px;-webkit-text-stroke:0.55px #c8c9d0;">DATABASE</span>
<span class="t" style="top:261.50px;left:1215.50px;font-size:17.80px;color:#c8c9d0;letter-spacing:2.647px;-webkit-text-stroke:0.55px #c8c9d0;">CONNECTION</span>
<span class="t" style="top:702.50px;left:1227.50px;font-size:17.80px;color:#c8c9d0;letter-spacing:2.797px;-webkit-text-stroke:0.55px #c8c9d0;">SSL</span>
<span class="t" style="top:702.50px;left:1571.50px;font-size:17.80px;color:#c8c9d0;letter-spacing:2.646px;-webkit-text-stroke:0.55px #c8c9d0;">SSH</span>
<span class="t" style="top:851.50px;left:1227.50px;font-size:17.80px;color:#c8c9d0;letter-spacing:2.270px;-webkit-text-stroke:0.55px #c8c9d0;">POOL</span>
<span class="t" style="top:185.30px;left:1279.00px;font-size:16.25px;color:#c9cad1;letter-spacing:0.066px;">Type</span>
<span class="t" style="top:317.40px;left:1243.50px;font-size:16.25px;color:#c9cad1;letter-spacing:0.180px;">Database</span>
<span class="t" style="top:365.20px;left:1280.00px;font-size:16.25px;color:#c9cad1;letter-spacing:0.270px;">Host</span>
<span class="t" style="top:413.30px;left:1284.00px;font-size:16.25px;color:#c9cad1;letter-spacing:0.172px;">Port</span>
<span class="t" style="top:461.90px;left:1280.00px;font-size:16.25px;color:#c9cad1;letter-spacing:0.047px;">User</span>
<span class="t" style="top:510.80px;left:1243.50px;font-size:16.25px;color:#c9cad1;letter-spacing:-0.045px;">Password</span>
<span class="t" style="top:560.20px;left:1243.50px;font-size:16.25px;color:#c9cad1;letter-spacing:0.180px;">Database</span>
<span class="t" style="top:607.70px;left:1182.00px;font-size:16.25px;color:#c9cad1;letter-spacing:0.272px;">Encrypt</span>
<span class="t" style="top:757.70px;left:1264.50px;font-size:16.25px;color:#c9cad1;letter-spacing:-0.234px;">Use SSL</span>
<span class="t" style="top:757.70px;left:1597.50px;font-size:16.25px;color:#c9cad1;letter-spacing:-0.020px;">Over SSH</span>
<span class="t" style="top:185.90px;left:1333.50px;font-size:18.75px;color:#cdced5;letter-spacing:-0.102px;">Custom</span>
<span class="t" style="top:318.00px;left:1333.50px;font-size:18.75px;color:#cdced5;letter-spacing:-0.227px;">Microsoft SQL Server</span>
<span class="t" style="top:365.80px;left:1333.50px;font-size:18.75px;color:#cdced5;letter-spacing:0.109px;">localhost</span>
<span class="t" style="top:413.90px;left:1333.50px;font-size:18.75px;color:#cdced5;letter-spacing:-0.305px;">1433</span>
<span class="t" style="top:462.50px;left:1333.50px;font-size:18.75px;color:#cdced5;letter-spacing:-1.406px;">sa</span>
<span class="t" style="top:560.80px;left:1333.50px;font-size:18.75px;color:#cdced5;letter-spacing:-0.234px;">db_Simple</span>
<span class="t" style="top:900.00px;left:1430.50px;font-size:16.25px;color:#dcdde2;letter-spacing:-0.549px;">Cancel</span>
<span class="t" style="top:900.00px;left:1543.50px;font-size:16.25px;color:#3d8be4;letter-spacing:-0.962px;">Save</span>
<span class="t" style="top:360.20px;left:1317.50px;font-size:20.00px;color:#d9414e;letter-spacing:0.000px;">*</span>
<span class="t" style="top:456.90px;left:1317.50px;font-size:20.00px;color:#d9414e;letter-spacing:0.000px;">*</span>
<span class="t" style="top:553.90px;left:1317.50px;font-size:20.00px;color:#d9414e;letter-spacing:0.000px;">*</span>
</div>
</body></html>
